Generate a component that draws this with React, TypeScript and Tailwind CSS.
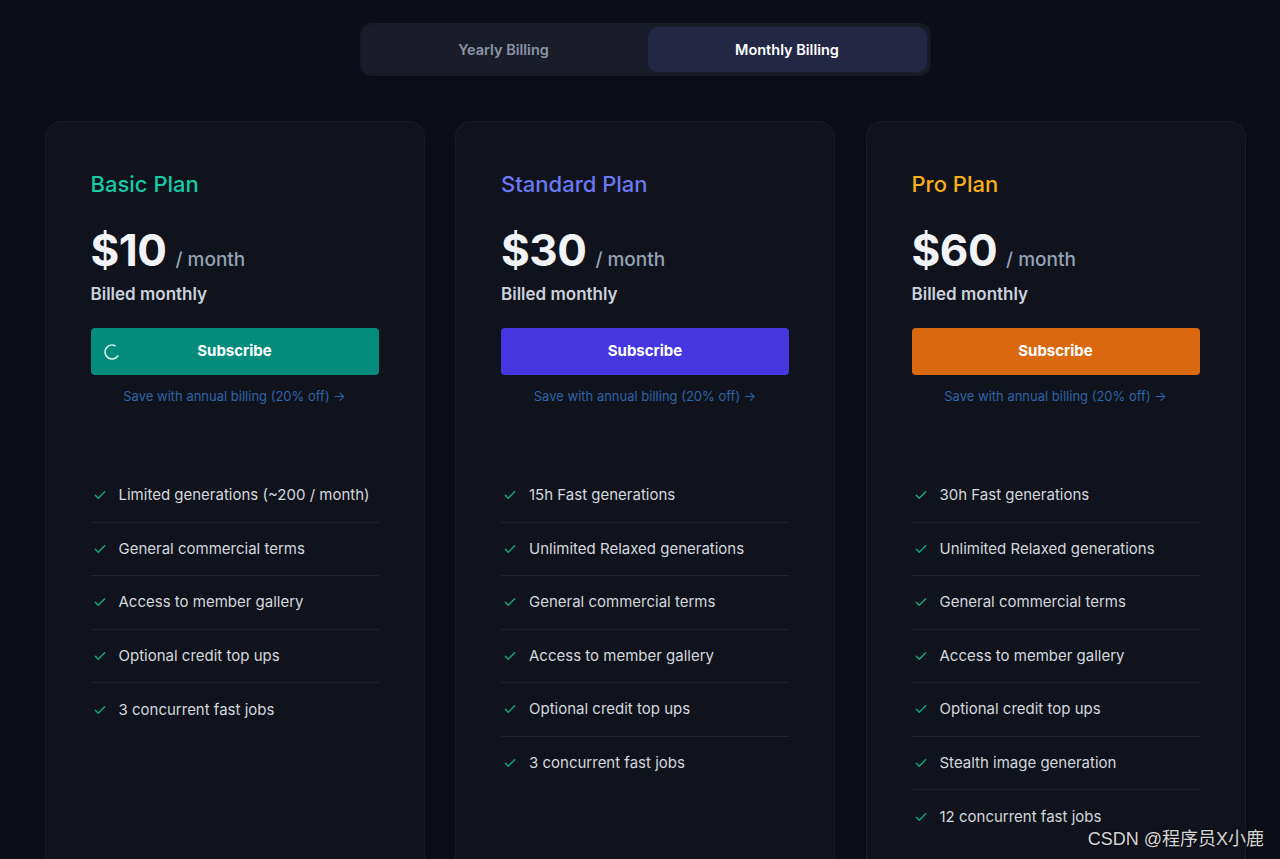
import React from "react";

type Plan = {
  name: string;
  price: string;
  titleClass: string;
  btnClass: string;
  spinner?: boolean;
  features: string[];
};

const plans: Plan[] = [
  {
    name: "Basic Plan",
    price: "$10",
    titleClass: "text-[#17c9a7]",
    btnClass: "bg-[#038b7b]",
    spinner: true,
    features: [
      "Limited generations (~200 / month)",
      "General commercial terms",
      "Access to member gallery",
      "Optional credit top ups",
      "3 concurrent fast jobs",
    ],
  },
  {
    name: "Standard Plan",
    price: "$30",
    titleClass: "text-[#6b78f2]",
    btnClass: "bg-[#4437df]",
    features: [
      "15h Fast generations",
      "Unlimited Relaxed generations",
      "General commercial terms",
      "Access to member gallery",
      "Optional credit top ups",
      "3 concurrent fast jobs",
    ],
  },
  {
    name: "Pro Plan",
    price: "$60",
    titleClass: "text-[#f6ae1a]",
    btnClass: "bg-[#da680f]",
    features: [
      "30h Fast generations",
      "Unlimited Relaxed generations",
      "General commercial terms",
      "Access to member gallery",
      "Optional credit top ups",
      "Stealth image generation",
      "12 concurrent fast jobs",
    ],
  },
];

function Check() {
  return (
    <svg width="14" height="14" viewBox="0 0 24 24" fill="none" stroke="#12a37f" strokeWidth="2.6" strokeLinecap="round" strokeLinejoin="round" className="shrink-0">
      <path d="M4 12.5l5 5L20 6.5" />
    </svg>
  );
}

function Spinner() {
  const c = 2 * Math.PI * 7;
  return (
    <svg width="18" height="18" viewBox="0 0 18 18" fill="none" className="absolute left-[12px] top-1/2 -translate-y-1/2">
      <circle
        cx="9"
        cy="9"
        r="7"
        stroke="#d8f3ee"
        strokeWidth="1.6"
        strokeLinecap="round"
        strokeDasharray={`${c * 0.72} ${c}`}
        transform="rotate(35 9 9)"
      />
    </svg>
  );
}

function Card({ plan }: { plan: Plan }) {
  return (
    <div className="h-[760px] w-[380px] shrink-0 rounded-[16px] border border-[#181c27] bg-[#10131c] px-[45px] pt-[48px]">
      <div className={`text-[22px] leading-[28px] font-medium ${plan.titleClass}`}>{plan.name}</div>
      <div className="mt-[26px] flex items-baseline">
        <span className="text-[44px] leading-[52px] font-bold tracking-[-0.5px] text-[#f1f3f7]">{plan.price}</span>
        <span className="ml-[9px] text-[19px] font-medium text-[#96a2b6]">/ month</span>
      </div>
      <div className="mt-[6px] text-[17px] leading-[24px] font-semibold text-[#cbd2dd]">Billed monthly</div>
      <button className={`relative mt-[22px] flex h-[47px] w-full items-center justify-center rounded-[4px] text-[15px] font-bold text-white ${plan.btnClass}`}>
        {plan.spinner && <Spinner />}
        Subscribe
      </button>
      <div className="mt-[12px] text-center text-[13px] leading-[18px] text-[#2f63a8]">
        Save with annual billing (20% off) →
      </div>
      <ul className="mt-[64px]">
        {plan.features.map((f, i) => (
          <li
            key={i}
            className="flex h-[53.5px] items-center gap-[12px] border-b border-[#1f2331] pl-[2px] text-[15px] text-[#d4d8df] last:border-b-0"
          >
            <Check />
            <span>{f}</span>
          </li>
        ))}
      </ul>
    </div>
  );
}

export default function App() {
  return (
    <div
      className="relative h-[859px] w-[1280px] overflow-hidden bg-[#0b0e16] pl-[10px]"
      style={{ fontFamily: "Inter, 'Noto Sans', sans-serif" }}
    >
      <div className="flex justify-center pt-[23px]">
        <div className="flex h-[53px] w-[571px] items-center gap-[4px] rounded-[12px] border-2 border-[#161a24] bg-[#1a1d29] p-[2px]">
          <div className="flex h-[45px] flex-1 items-center justify-center rounded-[10px] text-[14.5px] font-semibold text-[#8a94a8]">
            Yearly Billing
          </div>
          <div className="flex h-[45px] w-[279px] items-center justify-center rounded-[10px] bg-[#232743] text-[14.5px] font-semibold text-white">
            Monthly Billing
          </div>
        </div>
      </div>
      <div className="mt-[45px] flex justify-center gap-[30.5px]">
        {plans.map((p) => (
          <Card key={p.name} plan={p} />
        ))}
      </div>
      <div
        className="absolute bottom-[6px] right-[16px] text-[18px] text-[#d6d6d6]"
        style={{ fontFamily: "'Liberation Sans', 'Noto Sans CJK SC', sans-serif", textShadow: "0 0 2px #000" }}
      >
        CSDN @程序员X小鹿
      </div>
    </div>
  );
}
